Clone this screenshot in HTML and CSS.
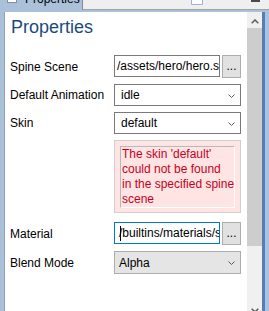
FILE: index.html
```html
<!DOCTYPE html>
<html>
<head>
<meta charset="utf-8">
<link rel="stylesheet" href="styles.css">
</head>
<body>
<div class="window">
  <div class="tabstrip">
    <div class="tab">
      <svg class="tab-icon" width="10" height="10" viewBox="0 0 10 10"><rect x="0.5" y="0.5" width="9" height="9" fill="#ffffff" stroke="#7f8ea0"/><rect x="1" y="1" width="8" height="2" fill="#6f9fd8"/></svg>
      <span class="tab-label">Properties</span>
    </div>
    <div class="tabstrip-rest">
      <svg class="doc-icon" width="12" height="12" viewBox="0 0 12 12"><path d="M0.5 0.5 H8 L11.5 4 V11.5 H0.5 Z" fill="#ffffff" stroke="#9fb4cc"/><path d="M8 0.5 V4 H11.5" fill="#e6eef7" stroke="#9fb4cc"/></svg>
      <span class="min-btn"></span>
    </div>
  </div>
  <div class="frame">
    <div class="panel">
      <h1 class="title">Properties</h1>
      <div class="form">
        <div class="row">
          <span class="label">Spine Scene</span>
          <div class="control field">
            <div class="textbox">/assets/hero/hero.spinescene</div>
            <div class="browse">...</div>
          </div>
        </div>
        <div class="row">
          <span class="label">Default Animation</span>
          <div class="control select">
            <span>idle</span>
            <svg class="chev" width="7" height="4" viewBox="0 0 7 4"><polyline points="0.5,0.5 3.5,3.5 6.5,0.5" fill="none" stroke="#5a5a5a"/></svg>
          </div>
        </div>
        <div class="row">
          <span class="label">Skin</span>
          <div class="control select">
            <span>default</span>
            <svg class="chev" width="7" height="4" viewBox="0 0 7 4"><polyline points="0.5,0.5 3.5,3.5 6.5,0.5" fill="none" stroke="#5a5a5a"/></svg>
          </div>
        </div>
        <div class="row row-error">
          <span class="label"></span>
          <div class="control error-box">
            <div class="error-inner">The skin 'default'<br>could not be found<br>in the specified spine<br>scene</div>
          </div>
        </div>
        <div class="row">
          <span class="label">Material</span>
          <div class="control field">
            <div class="textbox focused"><span class="caret"></span>/builtins/materials/spine.material</div>
            <div class="browse">...</div>
          </div>
        </div>
        <div class="row">
          <span class="label">Blend Mode</span>
          <div class="control select select-grey">
            <span>Alpha</span>
            <svg class="chev" width="7" height="4" viewBox="0 0 7 4"><polyline points="0.5,0.5 3.5,3.5 6.5,0.5" fill="none" stroke="#5a5a5a"/></svg>
          </div>
        </div>
      </div>
    </div>
    <div class="scrollbar">
      <div class="sb-btn sb-up"><svg width="8" height="5" viewBox="0 0 8 5"><polyline points="0.7,4.3 4,1 7.3,4.3" fill="none" stroke="#606060" stroke-width="1.6"/></svg></div>
      <div class="sb-thumb"></div>
      <div class="sb-track"></div>
      <div class="sb-btn sb-down"><svg width="8" height="5" viewBox="0 0 8 5"><polyline points="0.7,0.7 4,4 7.3,0.7" fill="none" stroke="#606060" stroke-width="1.6"/></svg></div>
    </div>
    <div class="frame-right"></div>
  </div>
</div>
</body>
</html>
```

FILE: styles.css
```css
html, body {
  margin: 0;
  padding: 0;
  overflow: hidden;
}

body {
  width: 269px;
  height: 311px;
  background: #abc1d9;
  font-family: "Liberation Sans", Arial, sans-serif;
  font-size: 12px;
  color: #000000;
}

.window {
  height: 320px;
  display: flex;
  flex-direction: column;
}

/* tab strip */
.tabstrip {
  height: 10px;
  flex: none;
  display: flex;
}

.tab {
  width: 82px;
  height: 10px;
  background: #abc1d9;
  border-right: 1px solid #7f8a96;
  display: flex;
  align-items: flex-end;
  overflow: hidden;
}

.tab-icon {
  flex: none;
  margin: 0 0 7px 7px;
}

.tab-label {
  line-height: 14px;
  margin: 0 0 4px 8px;
  white-space: nowrap;
}

.tabstrip-rest {
  flex: 1;
  height: 9px;
  background: #efefef;
  border-bottom: 1px solid #a3a3a3;
  display: flex;
  align-items: flex-start;
  overflow: hidden;
}

.doc-icon {
  flex: none;
  margin: -7px 0 0 108px;
}

.min-btn {
  width: 9px;
  height: 2px;
  background: #4a4a4a;
  margin: 0 0 0 48px;
}

/* frame */
.frame {
  flex: 1;
  display: flex;
  padding: 2px 0 0 4px;
}

.panel {
  width: 243px;
  flex: none;
  background: #ffffff;
  border-left: 1px solid #8ea3bb;
  padding: 5px 0 0 5px;
  box-sizing: border-box;
}

.title {
  margin: 0;
  padding-left: 1px;
  font-size: 18px;
  line-height: 21px;
  font-weight: normal;
  color: #1b4b7d;
}

.form {
  margin-top: 17px;
  display: flex;
  flex-direction: column;
  gap: 6px;
}

.row {
  display: flex;
  align-items: center;
}

.row-error {
  align-items: flex-start;
  margin-bottom: 3px;
}

.label {
  width: 104px;
  flex: none;
  white-space: nowrap;
}

.control {
  width: 127px;
  flex: none;
  box-sizing: border-box;
}

/* text field + browse button */
.field {
  display: flex;
  align-items: flex-start;
  gap: 2px;
}

.textbox {
  width: 106px;
  height: 22px;
  box-sizing: border-box;
  border: 1px solid #7a7a7a;
  background: #ffffff;
  padding: 0 2px;
  line-height: 20px;
  white-space: nowrap;
  overflow: hidden;
  position: relative;
}

.textbox.focused {
  border-color: #0078d7;
  padding-left: 4px;
}

.caret {
  position: absolute;
  left: 5px;
  top: 3px;
  width: 1px;
  height: 15px;
  background: #000000;
}

.browse {
  width: 19px;
  height: 23px;
  box-sizing: border-box;
  border: 1px solid #adadad;
  background: #e1e1e1;
  text-align: center;
  line-height: 21px;
}

/* combo boxes */
.select {
  height: 22px;
  border: 1px solid #7a7a7a;
  background: #ffffff;
  display: flex;
  align-items: center;
  justify-content: space-between;
  padding: 0 5px 0 6px;
}

.select-grey {
  height: 23px;
  background: #e5e5e5;
  border-color: #adadad;
  padding-left: 4px;
}

.chev {
  flex: none;
  margin-top: 1px;
}

/* error message */
.error-box {
  height: 73px;
  border: 1px solid #cfcfcf;
  background: #ffe4e4;
  padding: 5px 5px 4px 5px;
}

.error-inner {
  height: 62px;
  box-sizing: border-box;
  border-top: 1px solid #b9b9b9;
  border-left: 1px solid #b9b9b9;
  border-right: 1px solid #ffffff;
  border-bottom: 1px solid #ffffff;
  padding-left: 1px;
  color: #c8001e;
  line-height: 15px;
  white-space: nowrap;
  overflow: hidden;
}

/* scrollbar */
.scrollbar {
  width: 15px;
  flex: none;
  background: #f0f0f0;
  display: flex;
  flex-direction: column;
}

.sb-btn {
  height: 16px;
  flex: none;
  display: flex;
  justify-content: center;
}

.sb-up {
  align-items: flex-start;
  padding-top: 7px;
  box-sizing: border-box;
}

.sb-down {
  align-items: flex-start;
  padding-top: 4px;
  box-sizing: border-box;
}

.sb-thumb {
  height: 218px;
  flex: none;
  background: #cdcdcd;
}

.sb-track {
  flex: 1;
}

.frame-right {
  width: 6px;
  flex: none;
  background: linear-gradient(to right, #6a7a8e 0 1px, #4a82c8 1px 3px, #a9c3df 3px);
}
```
